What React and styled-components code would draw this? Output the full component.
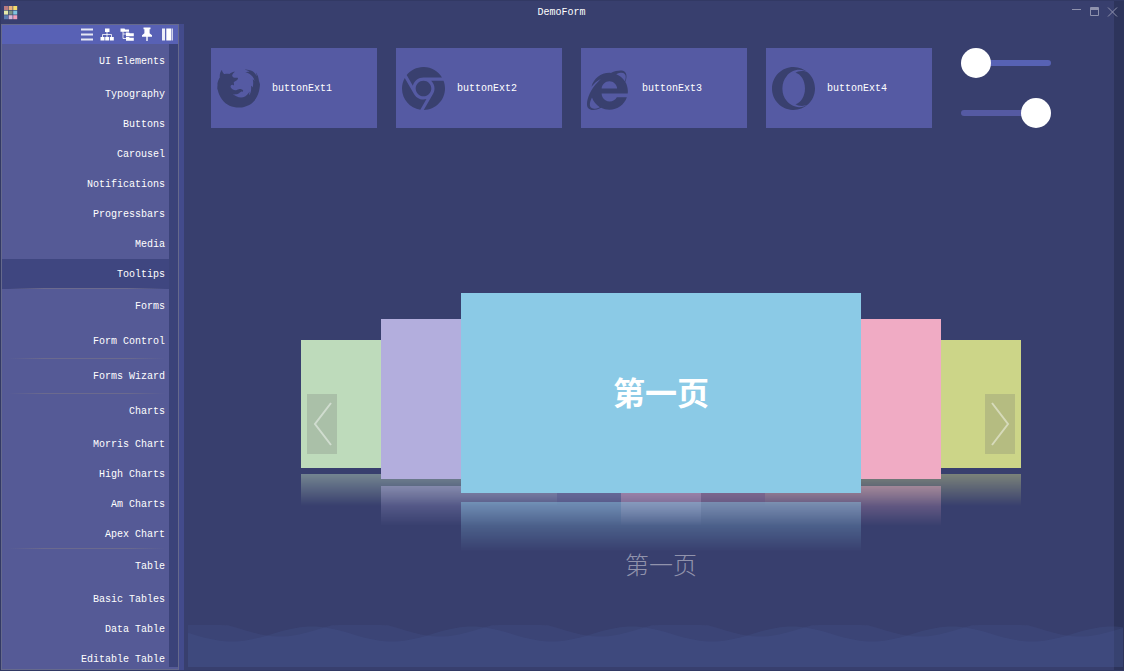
import React, { useState } from "react";
import styled, { createGlobalStyle } from "styled-components";
import { ImFirefox, ImChrome, ImIe, ImOpera } from "react-icons/im";

const GlobalStyle = createGlobalStyle`
  * {
    box-sizing: border-box;
  }
  body {
    margin: 0;
    background: #383f6e;
  }
  body, button, input {
    font-family: "Liberation Mono", "Noto Sans CJK SC", monospace;
    font-size: 10px;
    color: #ffffff;
  }
  button {
    border: 0;
    padding: 0;
    background: none;
    cursor: pointer;
  }
`;

const Window = styled.div`
  display: flex;
  flex-direction: column;
  height: 100vh;
  overflow: hidden;
  border: 1px solid #323964;
  border-right: 0;
  background: linear-gradient(to left, #2d345b 10px, #383f6e 10px);
`;

const TitleBar = styled.header`
  display: grid;
  grid-template-columns: 1fr auto 1fr;
  align-items: center;
  height: 23px;
  flex: none;
  padding: 0 5px 0 3px;
`;

const Title = styled.h1`
  margin: 0;
  font-size: 10px;
  font-weight: 400;
`;

const WindowControls = styled.div`
  display: flex;
  justify-content: flex-end;
  gap: 6px;
`;

const ControlButton = styled.button`
  width: 12px;
  height: 12px;

  svg {
    display: block;
  }
`;

const Body = styled.div`
  display: flex;
  flex: 1;
  min-height: 0;
`;

const Sidebar = styled.aside`
  display: flex;
  flex-direction: column;
  flex: none;
  width: 178px;
  border: 1px solid #666a8c;
  background: #555a96;
`;

const SidebarTools = styled.div`
  display: flex;
  justify-content: flex-end;
  gap: 6px;
  flex: none;
  height: 19px;
  padding: 2px 4px;
  background: #5861b5;
`;

const ToolButton = styled.button`
  width: 14px;
  height: 14px;

  svg {
    display: block;
  }
`;

const SidebarScroll = styled.div`
  display: flex;
  flex: 1;
  min-height: 0;
`;

const Menu = styled.nav`
  flex: 1;
  overflow: hidden;
`;

const ScrollTrack = styled.div`
  width: 9px;
  margin-bottom: 2px;
  background: #3b4379;
`;

const Splitter = styled.div`
  flex: none;
  width: 5px;
  background: #434b8c;
`;

const MenuItem = styled.a`
  display: flex;
  align-items: center;
  justify-content: flex-end;
  height: ${({ $group }) => ($group ? 35 : 30)}px;
  padding-right: 4px;
  color: #ffffff;
  text-decoration: none;
  background-color: ${({ $active }) => ($active ? "#3f4680" : "transparent")};
  background-image: ${({ $line }) =>
    $line ? "linear-gradient(to right, transparent 4%, #6b6a8e 25%, #6b6a8e 75%, transparent 98%)" : "none"};
  background-position: bottom;
  background-size: 100% 1px;
  background-repeat: no-repeat;
`;

const Main = styled.main`
  display: flex;
  flex-direction: column;
  flex: 1;
  min-width: 0;
`;

const Content = styled.div`
  flex: 1;
  padding: 24px 10px 0 24px;
`;

const ButtonBar = styled.div`
  display: flex;
  gap: 19px;
  padding-left: 3px;
`;

const BrowserButton = styled.button`
  display: flex;
  align-items: center;
  gap: 12px;
  width: 166px;
  height: 80px;
  padding-left: 6px;
  background: #555aa3;

  svg {
    color: #39406f;
  }
`;

const Sliders = styled.div`
  display: flex;
  flex-direction: column;
  gap: 20px;
  margin-left: 10px;
`;

const Slider = styled.input`
  appearance: none;
  width: 90px;
  height: 30px;
  margin: 0;
  background: none;

  &::-webkit-slider-runnable-track {
    height: 6px;
    border-radius: 3px;
    background: ${({ $track }) => $track};
  }

  &::-webkit-slider-thumb {
    appearance: none;
    width: 30px;
    height: 30px;
    margin-top: -12px;
    border-radius: 50%;
    background: #ffffff;
  }
`;

const Carousel = styled.section`
  display: flex;
  flex-direction: column;
  align-items: center;
  margin-top: 165px;
`;

const Stage = styled.div`
  display: grid;
  grid-template-columns: 80px 80px 400px 80px 80px;
  align-items: start;
`;

const Slide = styled.figure`
  grid-row: 1;
  grid-column: ${({ $inset }) => `${1 + $inset} / ${-1 - $inset}`};
  justify-self: ${({ $side }) => $side};
  z-index: ${({ $layer }) => $layer};
  width: ${({ $size }) => $size * 2}px;
  margin: ${({ $drop }) => $drop}px 0 0;
`;

const Face = styled.div`
  height: ${({ $size }) => $size}px;
  background: ${({ $color }) => $color};
  font-family: "Noto Sans CJK SC", sans-serif;
  font-size: 32px;
  font-weight: 700;
  line-height: 196px;
  text-align: center;
`;

const Reflection = styled.div`
  height: ${({ $size }) => $size / 4}px;
  margin-top: ${({ $gap }) => $gap}px;
  background: ${({ $color }) => $color};
  opacity: 0.45;
  mask-image: linear-gradient(#000000, transparent);
`;

const ArrowButton = styled.button`
  grid-row: 1;
  grid-column: 1 / -1;
  justify-self: ${({ $side }) => $side};
  z-index: 4;
  width: 30px;
  height: 60px;
  margin: 101px 6px 0;
  background: rgba(110, 110, 110, 0.24);

  svg {
    display: block;
  }
`;

const Caption = styled.p`
  margin: 0;
  font-family: "Noto Sans CJK SC", sans-serif;
  font-size: 24px;
  font-weight: 300;
  line-height: 24px;
  color: #9193ac;
`;

const WaveArea = styled.div`
  flex: none;
  height: 42px;
  margin: 0 1px 3px 4px;

  svg {
    display: block;
  }
`;

const LOGO_COLORS = [
  "#b97a82", "#e9b27c", "#f5dc6c",
  "#e4eaab", "#7a9282", "#7fc3de",
  "#5a7bb0", "#d6b6d8", "#ee9fba",
];

const MENU = [
  { label: "UI Elements", group: true },
  { label: "Typography" },
  { label: "Buttons" },
  { label: "Carousel" },
  { label: "Notifications" },
  { label: "Progressbars" },
  { label: "Media" },
  { label: "Tooltips", line: true },
  { label: "Forms", group: true },
  { label: "Form Control", group: true, line: true },
  { label: "Forms Wizard", group: true, line: true },
  { label: "Charts", group: true },
  { label: "Morris Chart" },
  { label: "High Charts" },
  { label: "Am Charts" },
  { label: "Apex Chart", line: true },
  { label: "Table", group: true },
  { label: "Basic Tables" },
  { label: "Data Table" },
  { label: "Editable Table" },
];

const BROWSERS = [
  { label: "buttonExt1", Icon: ImFirefox },
  { label: "buttonExt2", Icon: ImChrome },
  { label: "buttonExt3", Icon: ImIe },
  { label: "buttonExt4", Icon: ImOpera },
];

const SLIDES = [
  { color: "#bedbbb", size: 128, inset: 0, side: "start", drop: 47, gap: 6, layer: 1 },
  { color: "#ccd588", size: 128, inset: 0, side: "end", drop: 47, gap: 6, layer: 1 },
  { color: "#b3aedd", size: 160, inset: 1, side: "start", drop: 26, gap: 7, layer: 2 },
  { color: "#f0abc4", size: 160, inset: 1, side: "end", drop: 26, gap: 7, layer: 2 },
  { color: "#8bcae6", size: 200, inset: 2, side: "start", drop: 0, gap: 9, layer: 3, text: "第一页" },
];

// sine curve filled down to the bottom of the strip
const wavePath = (middle, height, trough) => {
  let d = "M0 42";
  for (let x = 0; x <= 4000; x += 8) {
    const y = middle + height * Math.cos(((x - trough) / 160) * Math.PI * 2);
    d += `L${x} ${Math.max(0, y).toFixed(1)}`;
  }
  return d + "L4000 42Z";
};

const Logo = () => (
  <svg width="14" height="14" viewBox="0 0 14 14">
    {LOGO_COLORS.map((color, i) => (
      <rect key={color} x={(i % 3) * 4.6} y={Math.floor(i / 3) * 4.6} width="4" height="4" fill={color} />
    ))}
  </svg>
);

const TOOLS = [
  {
    label: "List",
    icon: <path d="M1 2.5h12M1 7.5h12M1 12.5h12" stroke="#fff" strokeOpacity="0.85" strokeWidth="2" />,
  },
  {
    label: "Hierarchy",
    icon: (
      <>
        <path d="M7 4v6M2.5 10V7.5h9V10" fill="none" stroke="#fff" strokeOpacity="0.8" />
        <path d="M5 1.5h4.5V5H5zM.5 10h4v3.5h-4zM5.2 10h4v3.5h-4zM10 10h3.8v3.5H10z" fill="#fff" />
      </>
    ),
  },
  {
    label: "Tree",
    icon: (
      <>
        <path d="M3 4v7.5h4M3 7h3" fill="none" stroke="#fff" strokeOpacity="0.8" />
        <path d="M.5 1.5h4l.8 1H9v2.2H.5zM6 5.5h3l.8.8h4v3H6zM6 10h3l.8.8h4v2.9H6z" fill="#fff" />
      </>
    ),
  },
  {
    label: "Pin",
    icon: <path d="M3.5.5h7v1.7h-.9v4L12 8.2v1.6H7.7V14H6.3V9.8H2V8.2l2.4-2v-4h-.9z" fill="#fff" />,
  },
  {
    label: "Panel",
    icon: (
      <>
        <path d="M2 1.5h3v12H2z" fill="#fff" fillOpacity="0.9" />
        <path d="M6.3 1.5h5v12h-5z" fill="#fff" />
        <path d="M11.8 1.5H13v12h-1.2z" fill="#fff" fillOpacity="0.7" />
      </>
    ),
  },
];

const App = () => {
  const [active, setActive] = useState("Tooltips");

  return (
    <>
      <GlobalStyle />
      <Window>
        <TitleBar>
          <Logo />
          <Title>DemoForm</Title>
          <WindowControls>
            <ControlButton aria-label="Minimize">
              <svg width="12" height="12" fill="none" stroke="#8f92ad">
                <path d="M1 2.500h9" />
              </svg>
            </ControlButton>
            <ControlButton aria-label="Maximize">
              <svg width="12" height="12" fill="none" stroke="#8f92ad">
                <path d="M1.5 .5h8v8h-8zM1 1.5h9M1 2.5h9" />
              </svg>
            </ControlButton>
            <ControlButton aria-label="Close">
              <svg width="12" height="12" fill="none" stroke="#8f92ad">
                <path d="M1 .5l9 9M10 .5l-9 9" />
              </svg>
            </ControlButton>
          </WindowControls>
        </TitleBar>

        <Body>
          <Sidebar>
            <SidebarTools>
              {TOOLS.map((tool) => (
                <ToolButton key={tool.label} aria-label={tool.label}>
                  <svg width="14" height="14" viewBox="0 0 14 14">
                    {tool.icon}
                  </svg>
                </ToolButton>
              ))}
            </SidebarTools>
            <SidebarScroll>
              <Menu>
                {MENU.map((item) => (
                  <MenuItem
                    key={item.label}
                    href="#"
                    $group={item.group}
                    $line={item.line}
                    $active={item.label === active}
                    onClick={() => setActive(item.label)}
                  >
                    {item.label}
                  </MenuItem>
                ))}
              </Menu>
              <ScrollTrack />
            </SidebarScroll>
          </Sidebar>
          <Splitter />

          <Main>
            <Content>
              <ButtonBar>
                {BROWSERS.map(({ label, Icon }) => (
                  <BrowserButton key={label}>
                    <Icon size={43} />
                    {label}
                  </BrowserButton>
                ))}
                <Sliders>
                  <Slider type="range" aria-label="First slider" defaultValue={0} $track="#5762b4" />
                  <Slider type="range" aria-label="Second slider" defaultValue={100} $track="#555aa3" />
                </Sliders>
              </ButtonBar>

              <Carousel>
                <Stage>
                  {SLIDES.map((s) => (
                    <Slide
                      key={s.color}
                      $size={s.size}
                      $inset={s.inset}
                      $side={s.side}
                      $drop={s.drop}
                      $layer={s.layer}
                    >
                      <Face $size={s.size} $color={s.color}>
                        {s.text}
                      </Face>
                      <Reflection $size={s.size} $color={s.color} $gap={s.gap} />
                    </Slide>
                  ))}
                  <ArrowButton $side="start" aria-label="Previous">
                    <svg width="30" height="60" fill="none" stroke="#fff" strokeOpacity="0.45" strokeWidth="2">
                      <path d="M24 9L8 30l16 21" />
                    </svg>
                  </ArrowButton>
                  <ArrowButton $side="end" aria-label="Next">
                    <svg width="30" height="60" fill="none" stroke="#fff" strokeOpacity="0.45" strokeWidth="2">
                      <path d="M7 9l16 21L7 51" />
                    </svg>
                  </ArrowButton>
                </Stage>
                <Caption>第一页</Caption>
              </Carousel>
            </Content>

            <WaveArea>
              <svg width="100%" height="42" fill="#4a5a98">
                <path d={wavePath(3.8, 7.7, 92)} fillOpacity="0.2" />
                <path d={wavePath(9, 7.5, 44)} fillOpacity="0.22" />
              </svg>
            </WaveArea>
          </Main>
        </Body>
      </Window>
    </>
  );
};

export default App;
